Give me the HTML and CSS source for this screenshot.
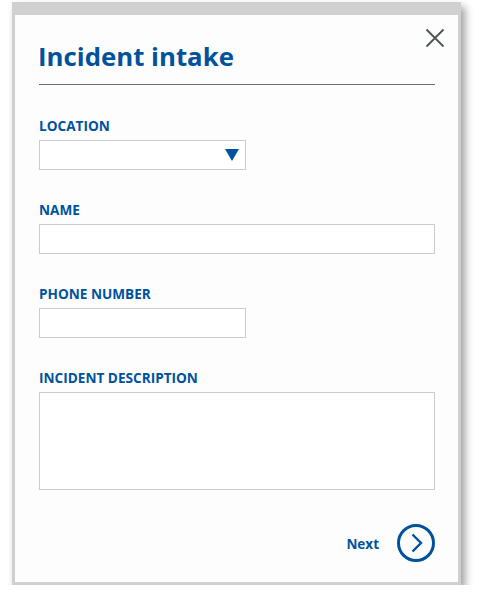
FILE: index.html

```html
<!DOCTYPE html>
<html lang="en">
<head>
  <meta charset="UTF-8" />
  <title>Incident intake</title>
  <link rel="stylesheet" href="styles.css">
</head>
<body>
<div class="panel">
  <button class="close" aria-label="Close">
    <svg width="20" height="20" viewBox="0 0 20 20">
      <path d="M1.5 1.5 L18.5 18.5 M18.5 1.5 L1.5 18.5" stroke="#4a5454" stroke-width="1.8" fill="none" />
    </svg>
  </button>

  <h1 class="title">Incident intake</h1>

  <form class="form">
    <div class="field">
      <label>LOCATION</label>
      <div class="select short">
        <span class="arrow"></span>
      </div>
    </div>

    <div class="field">
      <label>NAME</label>
      <input type="text" />
    </div>

    <div class="field">
      <label>PHONE NUMBER</label>
      <input type="text" class="short" />
    </div>

    <div class="field">
      <label>INCIDENT DESCRIPTION</label>
      <textarea></textarea>
    </div>
  </form>

  <div class="footer">
    <span class="next-label">Next</span>
    <button class="next" aria-label="Next">
      <svg width="38" height="38" viewBox="0 0 38 38">
        <circle cx="19" cy="19" r="17.5" stroke="#00529c" stroke-width="3" fill="none" />
        <path d="M15.5 10.5 L24 19 L15.5 27.5" stroke="#00529c" stroke-width="2.4" fill="none" />
      </svg>
    </button>
  </div>
</div>
</body>
</html>
```

FILE: styles.css

```css
body {
  margin: 0;
  background: #fff;
  font-family: "Open Sans", "Noto Sans", sans-serif;
}

.panel {
  position: relative;
  box-sizing: border-box;
  width: 449px;
  height: 583px;
  margin: 2px 0 0 12px;
  padding: 25px 23px 0 24px;
  background: #fdfdfd;
  border: solid #d0d0d0;
  border-width: 13px 3px 3px 3px;
  box-shadow: 4px 5px 8px rgba(0, 0, 0, 0.38);
}

.close {
  position: absolute;
  top: 13px;
  right: 13px;
  width: 20px;
  height: 20px;
  padding: 0;
  border: none;
  background: none;
}

.close svg,
.next svg {
  display: block;
}

.title {
  margin: 0;
  height: 42px;
  padding-bottom: 2px;
  border-bottom: 1px solid #6e6e6e;
  font-size: 25.8px;
  line-height: 32px;
  font-weight: 700;
  color: #00529c;
  text-indent: -1px;
}

.form {
  display: flex;
  flex-direction: column;
  gap: 30px;
  margin-top: 31px;
}

.field {
  display: flex;
  flex-direction: column;
  align-items: flex-start;
}

.field label {
  height: 24px;
  font-size: 13.6px;
  line-height: 20px;
  font-weight: 700;
  color: #00529c;
}

.field input,
.field textarea {
  box-sizing: border-box;
  width: 100%;
  height: 30px;
  margin: 0;
  padding: 4px;
  background: #fff;
  border: 1px solid #cccccc;
  border-radius: 0;
  resize: none;
  display: block;
}

.field textarea {
  height: 98px;
}

.field .short {
  width: 207px;
}

.select {
  box-sizing: border-box;
  display: flex;
  align-items: center;
  justify-content: flex-end;
  height: 30px;
  padding-right: 6px;
  background: #fff;
  border: 1px solid #cccccc;
}

.arrow {
  width: 0;
  height: 0;
  border-style: solid;
  border-width: 12px 7px 0 7px;
  border-color: #00529c transparent transparent transparent;
}

.footer {
  display: flex;
  align-items: center;
  justify-content: flex-end;
  gap: 18px;
  margin-top: 34px;
}

.next-label {
  padding-top: 2px;
  font-size: 13.5px;
  font-weight: 700;
  color: #00529c;
}

.next {
  width: 38px;
  height: 38px;
  padding: 0;
  border: none;
  background: none;
}
```
